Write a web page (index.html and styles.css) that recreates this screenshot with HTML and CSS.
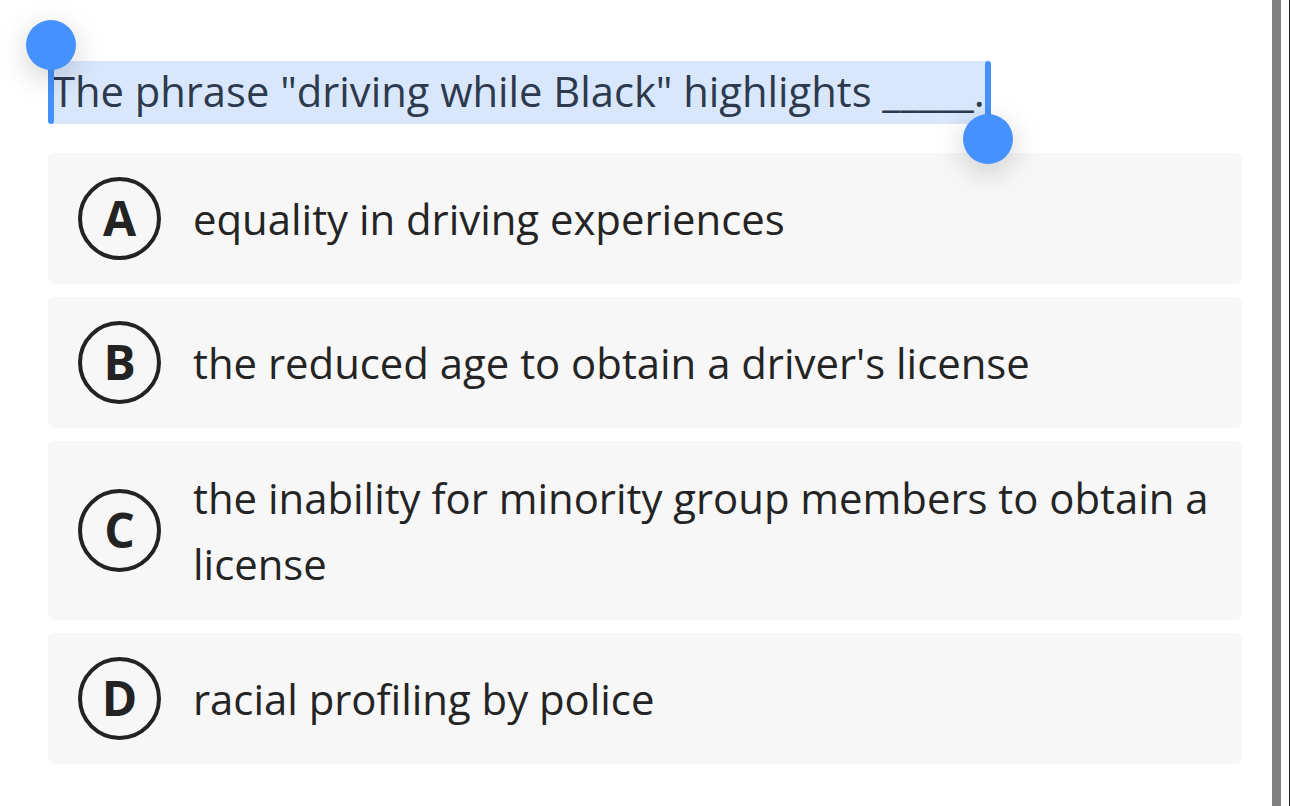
FILE: index.html
```html
<!DOCTYPE html>
<html lang="en">
<head>
<meta charset="utf-8">
<title>Question</title>
<link rel="stylesheet" href="styles.css">
</head>
<body>
<div class="app">
  <main class="quiz">
    <div class="question">
      <span class="sel">The phrase "driving while Black" highlights _____.<span class="handle handle-start"><span class="stem"></span><span class="knob"></span></span><span class="handle handle-end"><span class="stem"></span><span class="knob"></span></span></span>
    </div>
    <ul class="options">
      <li class="option"><span class="letter">A</span><span class="text">equality in driving experiences</span></li>
      <li class="option"><span class="letter">B</span><span class="text">the reduced age to obtain a driver's license</span></li>
      <li class="option"><span class="letter">C</span><span class="text">the inability for minority group members to obtain a license</span></li>
      <li class="option"><span class="letter">D</span><span class="text">racial profiling by police</span></li>
    </ul>
  </main>
  <div class="rail"></div>
  <div class="edge"></div>
</div>
</body>
</html>
```
FILE: styles.css
```css
* { box-sizing: border-box; }
html, body { margin: 0; padding: 0; background: #ffffff; }
body {
  font-family: "Open Sans", "Noto Sans", sans-serif;
  width: 1290px;
  height: 806px;
  overflow: hidden;
}
.app {
  display: flex;
  height: 806px;
}
.quiz {
  width: 1194px;
  margin-left: 48px;
  padding-top: 61px;
}
.question {
  padding-left: 2px;
  font-size: 41.7px;
  color: #2d3a4d;
}
.sel {
  position: relative;
  display: inline-block;
  height: 63px;
  line-height: 59px;
  background: #d9e7fd;
  padding-left: 2px;
  padding-right: 3px;
  white-space: nowrap;
}
.handle {
  position: absolute;
  width: 50px;
}
.handle-start { left: -24px; top: -41px; height: 104px; }
.handle-end { right: -25px; top: 0; height: 103px; }
.knob {
  position: absolute;
  left: 0;
  width: 50px;
  height: 50px;
  border-radius: 50%;
  background: #4591fd;
  box-shadow: 0 8px 30px rgba(0, 0, 0, 0.18);
}
.stem {
  position: absolute;
  left: 22px;
  width: 6px;
  background: #4591fd;
  border-radius: 3px;
}
.handle-start .knob { top: 0; }
.handle-start .stem { top: 25px; height: 79px; }
.handle-end .knob { top: 53px; }
.handle-end .stem { top: 0; height: 78px; }
.options {
  list-style: none;
  margin: 29px 0 0;
  padding: 0;
  display: flex;
  flex-direction: column;
  gap: 13px;
}
.option {
  display: flex;
  align-items: center;
  background: #f7f7f7;
  border-radius: 6px;
  padding: 24px 24px 24px 30px;
  min-height: 131px;
}
.letter {
  flex: none;
  width: 83px;
  height: 83px;
  border: 4.5px solid #232323;
  border-radius: 50%;
  display: flex;
  align-items: center;
  justify-content: center;
  font-weight: 700;
  font-size: 48px;
  line-height: 1;
  color: #232323;
  padding-bottom: 2px;
}
.text {
  margin-left: 32px;
  font-size: 41.85px;
  line-height: 65.5px;
  color: #242424;
}
.rail {
  margin-left: 30px;
  width: 9px;
  background: #808080;
  flex: none;
}
.edge {
  margin-left: 8px;
  width: 1px;
  background: #2a2a2a;
  flex: none;
}
```
